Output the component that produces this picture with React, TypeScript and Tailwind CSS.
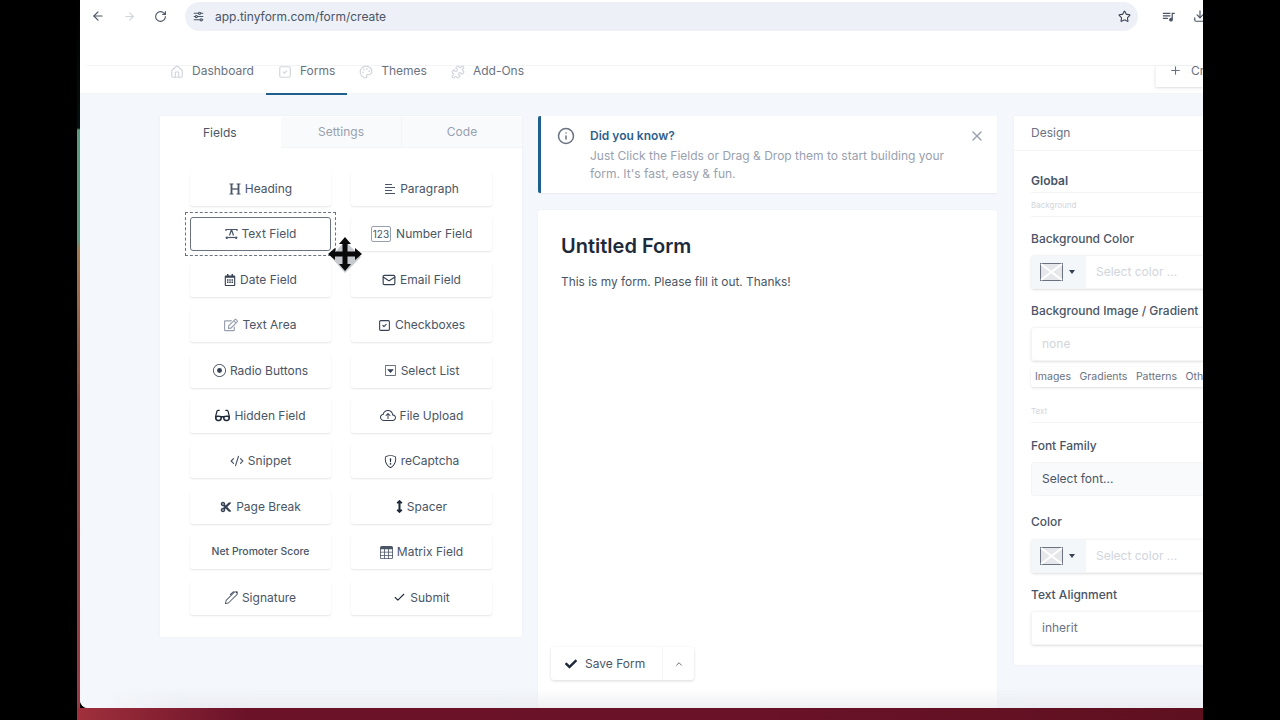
import {
  LuArrowLeft,
  LuArrowRight,
  LuRotateCw,
  LuStar,
  LuDownload,
  LuHouse,
  LuSquareCheck,
  LuPalette,
  LuPuzzle,
  LuPlus,
  LuInfo,
  LuX,
  LuChevronUp,
  LuCheck,
  LuMail,
  LuCodeXml,
} from "react-icons/lu";
import { TbAdjustmentsHorizontal } from "react-icons/tb";
import {
  FaRegCalendarAlt,
  FaRegEdit,
  FaCheck,
  FaArrowsAltV,
  FaGlasses,
  FaCut,
} from "react-icons/fa";
import {
  BsRecordCircle,
  BsCaretDownSquare,
  BsShieldExclamation,
  BsCloudArrowUp,
  BsTable,
  BsPen,
} from "react-icons/bs";
import { MdOutlineQueueMusic } from "react-icons/md";

const HeadingIcon = () => (
  <svg width="12" height="12" viewBox="0 0 12 12" fill="none" stroke="currentColor">
    <path d="M0.5 1 H4.5 M7.5 1 H11.5 M0.5 11 H4.5 M7.5 11 H11.5" strokeWidth="1.2" />
    <path d="M2.5 1 V11 M9.5 1 V11" strokeWidth="1.8" />
    <path d="M2.5 6 H9.5" strokeWidth="1.3" />
  </svg>
);

const ParagraphIcon = () => (
  <svg width="12" height="12" viewBox="0 0 12 12" fill="none" stroke="currentColor" strokeWidth="1.1">
    <path d="M1 1.5 H8 M1 4.5 H11 M1 7.5 H8 M1 10.5 H11" />
  </svg>
);

const TextFieldIcon = () => (
  <svg width="13" height="12" viewBox="0 0 13 12" fill="none" stroke="currentColor" strokeWidth="1.2">
    <path d="M1 3 V1.5 H12 V3 M6.5 1.5 L4.5 7.5 M6.5 1.5 L8.5 7.5" />
    <path d="M2.5 9.5 H10.5" />
    <circle cx="1.8" cy="9.7" r="1.2" fill="currentColor" stroke="none" />
    <circle cx="11.2" cy="9.7" r="1.2" fill="currentColor" stroke="none" />
  </svg>
);

const FIELDS = [
  { label: "Heading", icon: <HeadingIcon /> },
  { label: "Paragraph", icon: <ParagraphIcon /> },
  { label: "Text Field", icon: <TextFieldIcon />, selected: true },
  {
    label: "Number Field",
    icon: (
      <span className="border border-gray-400 rounded-[2px] px-[1px] text-[10px] leading-[14px] mr-[1px]">
        123
      </span>
    ),
  },
  { label: "Date Field", icon: <FaRegCalendarAlt size={12} className="text-gray-700" /> },
  { label: "Email Field", icon: <LuMail size={14} className="text-gray-700" /> },
  { label: "Text Area", icon: <FaRegEdit size={14} className="text-gray-400" /> },
  { label: "Checkboxes", icon: <LuSquareCheck size={13} className="text-gray-700" /> },
  { label: "Radio Buttons", icon: <BsRecordCircle size={13} className="text-gray-700" /> },
  { label: "Select List", icon: <BsCaretDownSquare size={11} className="text-gray-700 mx-[1px]" /> },
  { label: "Hidden Field", icon: <FaGlasses size={15} className="text-gray-800" /> },
  { label: "File Upload", icon: <BsCloudArrowUp size={16} className="text-gray-700" /> },
  { label: "Snippet", icon: <LuCodeXml size={14} /> },
  { label: "reCaptcha", icon: <BsShieldExclamation size={13} className="text-gray-800" /> },
  { label: "Page Break", icon: <FaCut size={12} className="text-gray-700" /> },
  { label: "Spacer", icon: <FaArrowsAltV size={13} className="text-gray-800 -mx-[3px]" /> },
  { label: "Net Promoter Score", small: true },
  { label: "Matrix Field", icon: <BsTable size={13} /> },
  { label: "Signature", icon: <BsPen size={13} className="text-gray-700" /> },
  { label: "Submit", icon: <LuCheck size={13} className="text-gray-800" /> },
];

function NavItem({ icon, label, active }: { icon: React.ReactNode; label: string; active?: boolean }) {
  return (
    <div
      className={
        "h-[29px] flex items-start gap-[8px] px-[12px] border-b-2 " +
        (active ? "border-[#1f5f8b]" : "border-transparent")
      }
    >
      <span className="text-gray-300 -mt-[1px]">{icon}</span>
      <span className="text-[12px] leading-[10px] text-gray-500">{label}</span>
    </div>
  );
}

function ColorInput() {
  return (
    <div className="h-[34px] w-[230px] flex border border-gray-100 rounded-[3px] shadow-sm">
      <div className="w-[54px] bg-[#f4f7fa] flex items-center pl-[8px] gap-[6px]">
        <svg width="23" height="18" viewBox="0 0 23 18" fill="none">
          <rect x="0.5" y="0.5" width="22" height="17" fill="#e5e7eb" stroke="#6b7280" />
          <path d="M1 1 L22 17 M22 1 L1 17" stroke="#fff" strokeWidth="2" />
        </svg>
        <span className="w-0 h-0 border-x-[3px] border-x-transparent border-t-[4px] border-t-gray-700" />
      </div>
      <div className="flex-1 flex items-center pl-[10px] text-[12px] text-gray-300">Select color ...</div>
    </div>
  );
}

function Label({ children, className }: { children: React.ReactNode; className?: string }) {
  return <div className={"text-[12px] leading-[16px] font-medium text-gray-600 " + className}>{children}</div>;
}

export default function App() {
  return (
    <div
      className="w-full h-screen bg-black flex overflow-hidden"
      style={{ fontFamily: "Inter, 'Noto Sans', sans-serif" }}
    >
      <div className="w-[77px] shrink-0" />
      <div className="w-[1126px] shrink-0 flex flex-col">
        <div className="h-[708px] flex">
          <div className="w-[3px] bg-[linear-gradient(to_bottom,#000_0,#06100e_128px,#5a9c80_130px,#5a9c80_240px,#a5794f_250px,#8a4a3a_400px,#9c3a44_700px)]" />

          {/* browser window */}
          <div className="relative flex-1 min-w-0 bg-white rounded-bl-lg overflow-hidden flex flex-col">
            <div className="h-[32px] shrink-0 flex items-center text-gray-600 pl-[11px]">
              <LuArrowLeft size={14} className="shrink-0" />
              <LuArrowRight size={13} className="ml-[18px] text-gray-300 shrink-0" />
              <LuRotateCw size={13} className="ml-[18px] shrink-0" />
              <div className="ml-[18px] w-[953px] shrink-0 h-[29px] rounded-full bg-[#edf0f7] flex items-center pl-[7px] pr-[6px]">
                <TbAdjustmentsHorizontal size={13} />
                <span className="ml-[10px] text-[12px] text-gray-600 pt-[1px]">app.tinyform.com/form/create</span>
                <LuStar size={13} className="ml-auto mr-[1px] fill-gray-100 text-gray-700" />
              </div>
              <MdOutlineQueueMusic size={15} className="ml-[23px] shrink-0" />
              <LuDownload size={14} className="ml-[17px] shrink-0" />
            </div>

            <div className="h-[34px] shrink-0 mx-[7px] border-b border-gray-100" />

            {/* app nav */}
            <div className="h-[28px] shrink-0 border-b border-gray-100 flex pl-[78px] relative">
              <NavItem icon={<LuHouse size={14} />} label="Dashboard" />
              <NavItem icon={<LuSquareCheck size={14} />} label="Forms" active />
              <NavItem icon={<LuPalette size={14} />} label="Themes" />
              <NavItem icon={<LuPuzzle size={14} />} label="Add-Ons" />
              <div className="absolute left-[1075px] top-0 w-[48px] h-[21px] bg-white shadow-sm border-l border-gray-100 flex items-start pl-[13px] text-[12px] leading-[10px] text-gray-500 gap-[9px]">
                <LuPlus size={13} className="shrink-0 -mt-[2px]" />
                <span>Cr</span>
              </div>
            </div>

            {/* builder */}
            <div className="flex-1 min-h-0 bg-[#f4f7fb] flex pl-[80px] pt-[22px]">
              <div className="w-[362px] h-[521px] shrink-0 bg-white shadow-[0_0_2px_rgba(0,0,0,0.06)]">
                <div className="flex h-[32px] text-[12px] pt-[1px]">
                  <div className="w-[121px] flex items-center pl-[43px] text-gray-600">Fields</div>
                  <div className="w-[121px] flex items-center justify-center text-gray-400 bg-[#f8fafc] border-b border-r border-gray-100">
                    Settings
                  </div>
                  <div className="w-[120px] flex items-center justify-center text-gray-400 bg-[#f8fafc] border-b border-gray-100">
                    Code
                  </div>
                </div>
                <div className="grid grid-cols-[141px_141px] gap-x-[20px] gap-y-[11.4px] pl-[30px] pt-[24px]">
                  {FIELDS.map((f) => (
                    <div
                      key={f.label}
                      className={
                        "relative h-[34px] rounded-[3px] flex items-center justify-center gap-[4px] text-gray-600 bg-white " +
                        (f.small ? "text-[10.4px] font-medium " : "text-[12px] ") +
                        (f.selected ? "border border-gray-500" : "shadow-[0_1px_2px_rgba(0,0,0,0.1)]")
                      }
                    >
                      {f.selected && (
                        <span className="absolute -inset-[6px] border border-dashed border-gray-500" />
                      )}
                      {f.icon}
                      <span>{f.label}</span>
                    </div>
                  ))}
                </div>
              </div>

              <div className="w-[459px] shrink-0 ml-[16px] flex flex-col gap-[17px]">
                <div className="h-[77px] shrink-0 bg-white border-l-[3px] border-[#1f5f8b] rounded-l-[2px] shadow-[0_1px_2px_rgba(0,0,0,0.06)] flex">
                  <LuInfo size={18} className="mt-[11px] ml-[16px] text-gray-500 shrink-0" />
                  <div className="ml-[15px] pt-[12px] w-[370px]">
                    <div className="text-[12px] leading-[16px] font-semibold text-[#2f5f8a]">Did you know?</div>
                    <div className="text-[12px] leading-[18px] text-gray-400 mt-[3px]">
                      Just Click the Fields or Drag &amp; Drop them to start building your form. It's fast, easy &amp; fun.
                    </div>
                  </div>
                  <LuX size={16} className="ml-auto mr-[12px] mt-[12px] text-gray-400 shrink-0" />
                </div>
                <div className="flex-1 min-h-0 bg-white rounded-t-[3px] shadow-[0_0_2px_rgba(0,0,0,0.06)] px-[23px] pt-[24px] flex flex-col">
                  <div className="text-[20px] leading-[24px] font-semibold text-gray-800">Untitled Form</div>
                  <div className="text-[11.9px] leading-[16px] text-gray-600 mt-[16px]">
                    This is my form. Please fill it out. Thanks!
                  </div>
                  <div className="mt-auto mb-[28px] -ml-[10px] w-[143px] h-[33px] flex bg-white rounded-[3px] shadow-[0_1px_3px_rgba(0,0,0,0.15)] text-[12px] text-gray-600">
                    <div className="flex-1 flex items-center pl-[14px] gap-[8px]">
                      <FaCheck size={12} className="text-gray-800" />
                      <span>Save Form</span>
                    </div>
                    <div className="w-[32px] flex items-center justify-center border-l border-gray-100">
                      <LuChevronUp size={10} />
                    </div>
                  </div>
                </div>
              </div>

              <div className="w-[260px] h-[549px] shrink-0 ml-[17px] bg-white shadow-[0_0_2px_rgba(0,0,0,0.06)]">
                <div className="h-[35px] border-b border-gray-100 flex items-center pl-[17px] text-[12px] text-gray-500">
                  Design
                </div>
                <div className="pl-[17px]">
                  <div className="mt-[22px] h-[20px] border-b border-gray-100 text-[12px] leading-[16px] font-semibold text-gray-600">
                    Global
                  </div>
                  <div className="h-[24px] border-b border-gray-100 text-[8px] leading-[24px] text-gray-300">
                    Background
                  </div>
                  <Label className="mt-[14px] mb-[8px]">Background Color</Label>
                  <ColorInput />
                  <Label className="mt-[14px] mb-[8px]">Background Image / Gradient</Label>
                  <div className="h-[34px] w-[230px] border border-gray-100 rounded-[3px] shadow-sm flex items-center pl-[10px] text-[12px] text-gray-300">
                    none
                  </div>
                  <div className="mt-[6px] h-[20px] w-[230px] shadow-sm rounded-[2px] flex items-center pl-[4px] gap-[8.5px] text-[10.5px] text-gray-500 whitespace-nowrap overflow-hidden">
                    <span>Images</span>
                    <span>Gradients</span>
                    <span>Patterns</span>
                    <span>Oth</span>
                  </div>
                  <div className="mt-[18px] h-[18px] border-b border-gray-100 text-[8px] leading-[12px] text-gray-300">
                    Text
                  </div>
                  <Label className="mt-[15px] mb-[8px]">Font Family</Label>
                  <div className="h-[34px] w-[230px] bg-[#f9fafb] border border-gray-100 rounded-[3px] flex items-center pl-[10px] text-[12px] text-gray-600">
                    Select font...
                  </div>
                  <Label className="mt-[18px] mb-[9px]">Color</Label>
                  <ColorInput />
                  <Label className="mt-[14px] mb-[8px]">Text Alignment</Label>
                  <div className="h-[34px] w-[230px] border border-gray-100 rounded-[3px] shadow-sm flex items-center pl-[10px] text-[12px] text-gray-500">
                    inherit
                  </div>
                </div>
              </div>
            </div>

            {/* soft shade along the bottom of the video frame */}
            <div className="absolute left-0 right-0 bottom-0 h-[20px] bg-gradient-to-t from-gray-200/60 to-transparent pointer-events-none [mask-image:linear-gradient(to_right,transparent_20px,black_100px)]" />

            {/* move cursor */}
            <svg
              className="absolute left-[245px] top-[234px]"
              width="40"
              height="40"
              viewBox="0 0 40 40"
            >
              <path d="M20 7 L36 23 L20 39 L6 23 Z" fill="#b8bcc2" fillOpacity="0.8" />
              <path
                d="M20 3 L26 10 L22.5 10 L22.5 17.5 L30 17.5 L30 14 L37 20 L30 26 L30 22.5 L22.5 22.5 L22.5 30 L26 30 L20 37 L14 30 L17.5 30 L17.5 22.5 L10 22.5 L10 26 L3 20 L10 14 L10 17.5 L17.5 17.5 L17.5 10 L14 10 Z"
                fill="#0a0a0a"
              />
            </svg>
          </div>
        </div>
        <div className="h-[12px] bg-[linear-gradient(to_right,#a0303c,#6b1229_15%,#6a1228_60%,#5e1020)]" />
      </div>
    </div>
  );
}
